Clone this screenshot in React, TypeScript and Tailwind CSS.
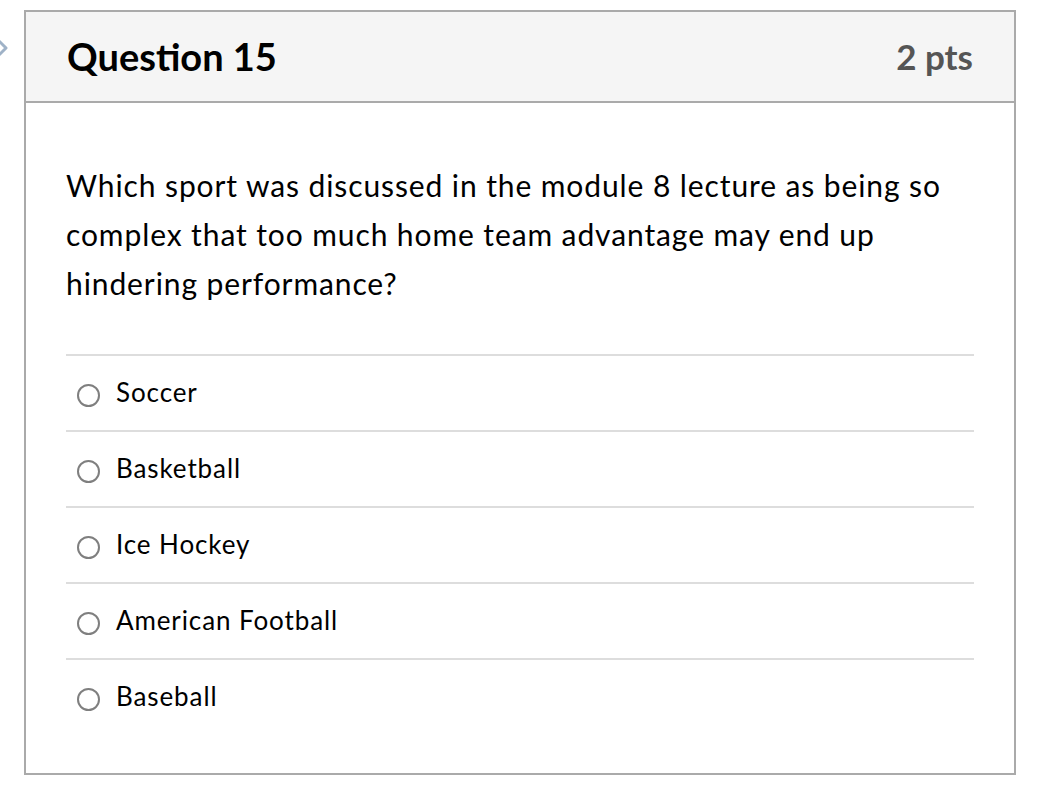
const options = ["Soccer", "Basketball", "Ice Hockey", "American Football", "Baseball"];

function Radio() {
  return (
    <span className="inline-block w-[23px] h-[23px] mt-[4px] rounded-full border-2 border-[#7f7f7f] bg-white shrink-0" />
  );
}

export default function App() {
  return (
    <div className="relative min-h-[810px] bg-white pt-[10px] pl-[24px] pr-[22px] font-['Lato','Liberation_Sans',sans-serif] text-black">
      {/* peeking nav arrow at the left edge */}
      <svg
        className="absolute left-[-10px] top-[36px]"
        width="18"
        height="24"
        viewBox="0 0 18 24"
        fill="none"
      >
        <path d="M6 2 L16 12 L6 22" stroke="#9fb2c7" strokeWidth="3" strokeLinejoin="round" />
      </svg>

      <div className="w-[992px] border-2 border-[#aaaaaa]">
        <div className="h-[91px] flex items-center justify-between px-[41px] bg-[#f5f5f5] border-b-2 border-[#aaaaaa]">
          <h2 className="text-[38px] font-bold">Question 15</h2>
          <span className="text-[35px] font-bold text-[#555555]">2 pts</span>
        </div>

        <div className="px-[40px] pt-[58px] pb-[39px]">
          <p className="text-[30px] leading-[49px] tracking-[0.9px] mb-[46px]">
            Which sport was discussed in the module 8 lecture as being so complex that too much home team advantage may end up hindering performance?
          </p>

          <div>
            {options.map((opt) => (
              <div
                key={opt}
                className="h-[76px] flex items-center gap-[16px] pl-[11px] border-t-2 border-[#dddddd]"
              >
                <Radio />
                <span className="text-[26px] tracking-[0.9px] -mt-[2px]">{opt}</span>
              </div>
            ))}
          </div>
        </div>
      </div>
    </div>
  );
}
